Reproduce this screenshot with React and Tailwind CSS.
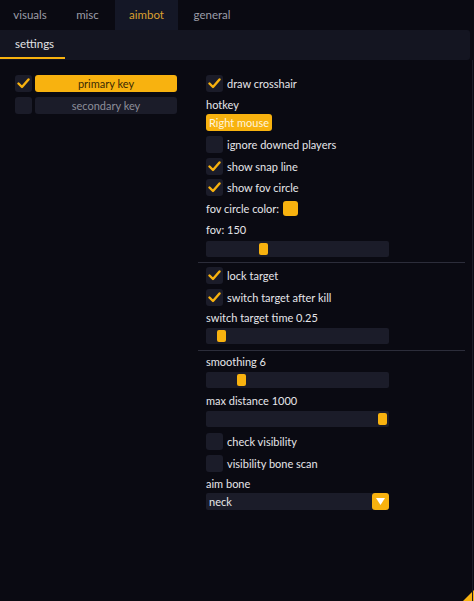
import React from "react";

const ORANGE = "#f8b20f";

function Check({ on }) {
  return (
    <div className="w-[17px] h-[17px] shrink-0 rounded-[3px] bg-[#1b1c29] flex items-center justify-center">
      {on && (
        <svg width="13" height="11" viewBox="0 0 13 11">
          <polyline points="1.5,5.5 5,9 11.5,1.5" fill="none" stroke={ORANGE} strokeWidth="2.4" strokeLinecap="round" strokeLinejoin="round" />
        </svg>
      )}
    </div>
  );
}

function CheckRow({ on, label, className = "" }) {
  return (
    <div className={`flex items-center gap-[4px] h-[17px] ${className}`}>
      <Check on={on} />
      <span className="text-[#e6e6ea]">{label}</span>
    </div>
  );
}

function Label({ children, className = "" }) {
  return <div className={`h-[16px] flex items-center text-[#e6e6ea] ${className}`}>{children}</div>;
}

function Slider({ frac, className = "" }) {
  const left = 2 + frac * 170;
  return (
    <div className={`relative w-[183px] h-[16px] rounded-[2px] bg-[#1b1c29] ${className}`}>
      <div className="absolute top-[2px] w-[9px] h-[12px] rounded-[2px] bg-[#f8b20f]" style={{ left }} />
    </div>
  );
}

function Sep({ className = "" }) {
  return <div className={`h-px w-[267px] -ml-[8px] bg-[#2c2d3a] ${className}`} />;
}

export default function App() {
  const tabs = [
    { name: "visuals", w: "w-[60px]" },
    { name: "misc", w: "w-[51px]" },
    { name: "aimbot", w: "w-[63px]", active: true },
    { name: "general", w: "w-[64px]" },
  ];

  return (
    <div
      className="relative w-[474px] h-[601px] overflow-hidden bg-[#0a0a12] text-[11px] leading-none"
      style={{ fontFamily: 'Lato, "Noto Sans", sans-serif' }}
    >
      {/* top tabs */}
      <div className="flex h-[30px] gap-[2px] text-[11.5px]">
        {tabs.map((t) => (
          <div
            key={t.name}
            className={`${t.w} h-full flex items-center justify-center ${
              t.active ? "bg-[#141726] text-[#dba030]" : "text-[#9c9da8]"
            }`}
          >
            {t.name}
          </div>
        ))}
      </div>

      {/* sub tabs */}
      <div className="h-[30px] mr-[4px] bg-[#141521] rounded-tr-[3px] rounded-br-[3px] flex">
        <div className="w-[65px] h-full flex flex-col">
          <div className="flex-1 flex items-center pl-[15px] text-[11.5px] text-[#e2e2e6]">settings</div>
          <div className="h-[2px] bg-[#f8b20f] mb-[1px]" />
        </div>
      </div>

      {/* content */}
      <div className="flex pt-[15px]">
        <div className="w-[198px] pl-[15px] flex flex-col gap-[5px]">
          <div className="flex items-center gap-[3px]">
            <Check on />
            <div className="w-[142px] h-[17px] rounded-[3px] bg-[#f8b20f] flex items-center justify-center text-[#3b2b05]">
              primary key
            </div>
          </div>
          <div className="flex items-center gap-[3px]">
            <Check />
            <div className="w-[142px] h-[17px] rounded-[3px] bg-[#1b1c29] flex items-center justify-center text-[#8d8e99]">
              secondary key
            </div>
          </div>
        </div>

        <div className="flex-1 pl-[8px] flex flex-col">
          <CheckRow on label="draw crosshair" />
          <Label className="mt-[4px]">hotkey</Label>
          <div className="mt-[2px] h-[17px] w-fit px-[3px] rounded-[3px] bg-[#f8b20f] flex items-center text-[#fff4dc]">
            Right mouse
          </div>
          <CheckRow label="ignore downed players" className="mt-[5px]" />
          <CheckRow on label="show snap line" className="mt-[5px]" />
          <CheckRow on label="show fov circle" className="mt-[4px]" />
          <div className="mt-[4px] h-[17px] flex items-center gap-[4px] text-[#e6e6ea]">
            <span>fov circle color:</span>
            <div className="w-[15px] h-[15px] rounded-[3px] bg-[#f8b20f]" />
          </div>
          <Label className="mt-[4px]">fov: 150</Label>
          <Slider frac={0.3} className="mt-[4px]" />
          <Sep className="mt-[5px]" />
          <CheckRow on label="lock target" className="mt-[4px]" />
          <CheckRow on label="switch target after kill" className="mt-[5px]" />
          <Label className="mt-[3px]">switch target time 0.25</Label>
          <Slider frac={0.05} className="mt-[3px]" />
          <Sep className="mt-[6px]" />
          <Label className="mt-[2px]">smoothing 6</Label>
          <Slider frac={0.172} className="mt-[3px]" />
          <Label className="mt-[4px]">max distance 1000</Label>
          <Slider frac={1} className="mt-[3px]" />
          <CheckRow label="check visibility" className="mt-[6px]" />
          <CheckRow label="visibility bone scan" className="mt-[5px]" />
          <Label className="mt-[3px]">aim bone</Label>
          <div className="mt-[2px] w-[183px] h-[17px] rounded-[2px] bg-[#1b1c29] flex items-center justify-between">
            <span className="pl-[3px] text-[#e6e6ea]">neck</span>
            <div className="w-[17px] h-[17px] rounded-[3px] bg-[#f8b20f] flex items-center justify-center">
              <svg width="9" height="7" viewBox="0 0 9 7">
                <polygon points="0,0 9,0 4.5,7" fill="#ffffff" />
              </svg>
            </div>
          </div>
        </div>
      </div>

      {/* resize grip */}
      <svg className="absolute right-0 bottom-0" width="11" height="11" viewBox="0 0 11 11">
        <polygon points="11,0 11,11 0,11" fill={ORANGE} />
      </svg>
      <div className="absolute right-[1px] top-[60px] bottom-0 w-px bg-[#1c1d28]" />
    </div>
  );
}
